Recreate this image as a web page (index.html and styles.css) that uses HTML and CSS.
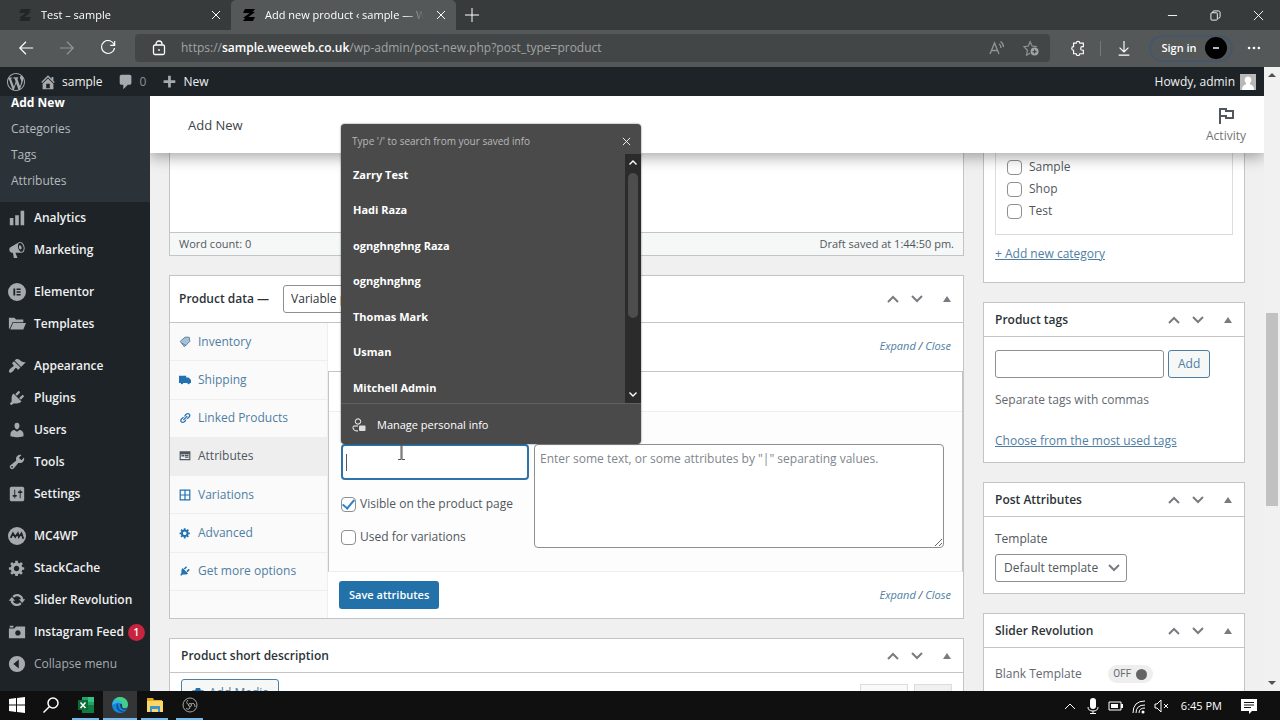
FILE: index.html
```html
<!DOCTYPE html>
<html lang="en">
<head>
    <meta charset="UTF-8">
    <meta name="viewport" content="width=device-width, initial-scale=1.0">
    <title>Add new product ‹ sample — WordPress</title>
    <link rel="stylesheet" href="styles.css">
</head>
<body>
    <svg class="sprite" aria-hidden="true">
        <symbol id="z-logo" viewBox="0 0 14 12"><path d="M3 0h10l-3 4H1zM4 8h9l-2 4H1zM9 3h4L5 9H1z"/></symbol>
        <symbol id="close" viewBox="0 0 10 10"><path d="M1 1l8 8M9 1L1 9"/></symbol>
        <symbol id="up" viewBox="0 0 14 10"><path d="M2 8l5-5 5 5"/></symbol>
        <symbol id="down" viewBox="0 0 14 10"><path d="M2 2l5 5 5-5"/></symbol>
        <symbol id="gear" viewBox="0 0 20 20"><path d="M18 12h-2.18c-.17.7-.44 1.35-.81 1.93l1.54 1.54-2.1 2.1-1.54-1.54c-.58.36-1.23.63-1.91.79V19H8v-2.18c-.68-.16-1.33-.43-1.91-.79l-1.54 1.54-2.12-2.12 1.54-1.54c-.36-.58-.63-1.23-.79-1.91H1V9.03h2.17c.16-.7.44-1.35.8-1.94L2.43 5.55l2.1-2.1 1.54 1.54c.58-.37 1.24-.64 1.93-.81V2h3v2.18c.68.16 1.33.43 1.91.79l1.54-1.54 2.12 2.12-1.54 1.54c.36.59.64 1.24.8 1.94H18V12zm-8.5 1.5c1.66 0 3-1.34 3-3s-1.34-3-3-3-3 1.34-3 3 1.34 3 3 3z"/></symbol>
        <symbol id="plug" viewBox="0 0 20 20"><path d="M13.11 4.36L9.87 7.6 8 5.73l3.24-3.24c.35-.34 1.05-.2 1.56.32.52.51.66 1.21.31 1.55zm-8 1.77l.91-1.12 9.01 9.01-1.19.84c-.71.71-2.63 1.16-3.82 1.16H6.14L4.9 17.26c-.59.59-1.54.59-2.12 0-.59-.58-.59-1.53 0-2.12l1.24-1.24v-3.88c0-1.13.4-3.19 1.09-3.89zm7.26 3.97l3.24-3.24c.34-.35 1.04-.21 1.55.31.52.51.66 1.21.31 1.55l-3.24 3.25z"/></symbol>
        <symbol id="media" viewBox="0 0 20 20"><path d="M7 3h6l1 3h4v11H2V6h4zm3 4a4 4 0 1 0 0 8 4 4 0 0 0 0-8z"/></symbol>
    </svg>

    <!-- Browser -->
    <div class="tabs">
        <div class="tab">
            <svg class="tab-logo"><use href="#z-logo"/></svg>
            <span class="tab-title">Test – sample</span>
            <button class="tab-close" aria-label="Close tab"><svg><use href="#close"/></svg></button>
        </div>
        <div class="tab active">
            <svg class="tab-logo"><use href="#z-logo"/></svg>
            <span class="tab-title">Add new product ‹ sample — WordPress</span>
            <button class="tab-close" aria-label="Close tab"><svg><use href="#close"/></svg></button>
        </div>
        <button class="new-tab" aria-label="New tab"><svg viewBox="0 0 14 14"><path d="M7 0v14M0 7h14"/></svg></button>
        <div class="window-buttons">
            <button aria-label="Minimize"><svg viewBox="0 0 12 12"><path d="M1 6h10"/></svg></button>
            <button aria-label="Restore"><svg viewBox="0 0 12 12"><rect x="1" y="3" width="7" height="8" rx="1"/><path d="M3 3V2q0-1 1-1h5q2 0 2 2v4q0 2-2 2"/></svg></button>
            <button aria-label="Close"><svg viewBox="0 0 12 12"><path d="M1 1l10 10M11 1L1 11"/></svg></button>
        </div>
    </div>
    <div class="toolbar">
        <button aria-label="Back"><svg viewBox="0 0 18 18"><path d="M17 9H2M9 2L2 9l7 7"/></svg></button>
        <button class="dim" aria-label="Forward"><svg viewBox="0 0 18 18"><path d="M1 9h15M9 2l7 7-7 7"/></svg></button>
        <button aria-label="Refresh"><svg viewBox="0 0 18 18"><path d="M16 5.500A7.300 7.300 0 1 0 16.300 9M16.500 1v5h-5"/></svg></button>
        <div class="address">
            <svg viewBox="0 0 14 16"><rect x="1.500" y="5" width="11" height="9.500" rx="1.500"/><path d="M4 5V4a3 3 0 0 1 6 0v1M7 9v2"/></svg>
            <span class="url">https://<b>sample.weeweb.co.uk</b>/wp-admin/post-new.php?post_type=product</span>
            <button class="dim" aria-label="Read aloud"><svg viewBox="0 0 16 16"><path d="M1 14L5.500 3 10 14M2.500 10.500h6M10 4q2 1 2 4M11.500 1.500q3 2 3 5.500"/></svg></button>
            <button class="dim" aria-label="Add to favorites"><svg viewBox="0 0 18 18"><path d="M8 15l-4 2 1-5.500L1 7.500l5-.7L8 2l2.300 4.800 5.200.7"/><circle class="dot" cx="13" cy="13" r="4.500"/><path class="cut" d="M13 10.800v4.400M10.800 13h4.400"/></svg></button>
        </div>
        <button aria-label="Extensions"><svg viewBox="0 0 18 18"><path d="M4 3.500h3a2 2 0 1 1 4 0h4v4h-1a2 2 0 1 0 0 4h1v4h-4a2 2 0 1 1-4 0H4v-4a2 2 0 1 1 0-4z"/></svg></button>
        <span class="divider"></span>
        <button aria-label="Downloads"><svg viewBox="0 0 18 18"><path d="M9 1v12M4 8.500l5 5 5-5M3 17h12"/></svg></button>
        <button class="sign-in">Sign in <span class="profile"></span></button>
        <button class="more" aria-label="Settings and more"><svg viewBox="0 0 18 18"><circle cx="3.500" cy="9" r="1.500"/><circle cx="9" cy="9" r="1.500"/><circle cx="14.500" cy="9" r="1.500"/></svg></button>
    </div>

    <!-- Page -->
    <div class="page">
        <div class="wp">
            <div class="admin-bar">
                <a href="#" aria-label="WordPress"><svg viewBox="0 0 20 20"><path d="M20 10c0-5.510-4.490-10-10-10C4.480 0 0 4.490 0 10c0 5.520 4.480 10 10 10 5.510 0 10-4.480 10-10zM7.780 15.370L4.370 6.220c.55-.02 1.170-.08 1.170-.08.5-.06.44-1.130-.06-1.110 0 0-1.450.11-2.370.11-.18 0-.37 0-.58-.01C4.120 2.690 6.870 1.110 10 1.110c2.330 0 4.450.87 6.050 2.340-.68-.11-1.650.39-1.650 1.580 0 .74.45 1.360.9 2.100.35.61.55 1.360.55 2.460 0 1.490-1.400 5-1.400 5l-3.030-8.370c.54-.02.82-.17.82-.17.5-.05.44-1.250-.06-1.220 0 0-1.440.12-2.380.12-.87 0-2.330-.12-2.330-.12-.5-.03-.56 1.200-.06 1.220l.92.08 1.260 3.410zM17.410 10c.24-.64.74-1.870.43-4.250.7 1.290 1.050 2.710 1.050 4.250 0 3.290-1.730 6.240-4.400 7.780.97-2.590 1.940-5.200 2.920-7.780zM6.100 18.090C3.120 16.650 1.110 13.530 1.110 10c0-1.300.23-2.480.72-3.590C3.250 10.300 4.670 14.200 6.100 18.090zm4.030-6.630l2.580 6.980c-.86.29-1.760.45-2.710.45-.79 0-1.570-.11-2.290-.33.81-2.380 1.620-4.740 2.420-7.100z"/></svg></a>
                <a href="#"><svg viewBox="0 0 20 20"><path d="M16 8.500l1.530 1.530-1.060 1.060L10 4.600l-6.470 6.490-1.060-1.060L10 2.500l4 4v-2h2v4zm-6-2.460l6 5.990V18H4v-5.970zM12 17v-5H8v5h4z"/></svg>sample</a>
                <a href="#" class="comments"><svg viewBox="0 0 20 20"><path d="M5 2h9c1.100 0 2 .9 2 2v7c0 1.100-.9 2-2 2h-2l-5 5v-5H5c-1.100 0-2-.9-2-2V4c0-1.100.9-2 2-2z"/></svg>0</a>
                <a href="#"><svg viewBox="0 0 20 20"><path d="M17 8v3h-5v5H9v-5H4V8h5V3h3v5h5z"/></svg>New</a>
                <a href="#" class="howdy">Howdy, admin <svg class="avatar" viewBox="0 0 16 16"><path d="M0 0h16v16H0z"/><path class="person" d="M2 16q0-5 4-5.500V9Q4 7 5 4q3-3 6 0 1 3-1 5v1.500q4 .5 4 5.500z"/></svg></a>
            </div>
            <div class="wp-body">
                <nav class="sidebar">
                    <div class="submenu">
                        <a href="#" class="current">Add New</a>
                        <a href="#">Categories</a>
                        <a href="#">Tags</a>
                        <a href="#">Attributes</a>
                    </div>
                    <a href="#"><svg viewBox="0 0 20 20"><path d="M18 18V2h-4v16h4zm-6 0V7H8v11h4zm-6 0v-8H2v8h4z"/></svg>Analytics</a>
                    <a href="#"><svg viewBox="0 0 20 20"><path d="M18.150 5.940c.46 1.620.38 3.220-.02 4.480-.42 1.280-1.260 2.180-2.300 2.480-.16.06-.26.06-.4.06-.06.02-.12.02-.18.02-.06.02-.14.02-.22.02h-6.800l2.220 5.500c.02.14-.06.26-.14.34-.08.1-.24.16-.34.16H6.950c-.1 0-.26-.06-.34-.16-.08-.08-.16-.2-.14-.34l-1-5.500H4.250l-.02-.02c-.5.06-1.080-.18-1.540-.62s-.88-1.080-1.060-1.880c-.24-.8-.2-1.560-.02-2.200.18-.62.58-1.080 1.060-1.300l.02-.02 9-5.400c.1-.06.18-.1.24-.16.06-.04.14-.08.24-.12.16-.08.28-.12.5-.18 1.040-.3 2.240.1 3.220.98s1.840 2.240 2.260 3.860zm-2.580 5.980h-.02c.4-.1.74-.34 1.040-.7.58-.7.86-1.760.86-3.040 0-.64-.1-1.300-.28-1.980-.34-1.360-1.020-2.500-1.780-3.240s-1.680-1.100-2.460-.88c-.82.22-1.400.96-1.700 2-.32 1.040-.28 2.360.06 3.720.38 1.360 1 2.500 1.800 3.240.78.74 1.620 1.100 2.480.88zm-2.540-7.080c.22-.04.42-.02.62.04.38.16.76.48 1.020 1s.42 1.200.42 1.780c0 .3-.04.56-.12.8-.18.48-.44.84-.86.94-.34.1-.8-.06-1.140-.4s-.64-.86-.78-1.500c-.18-.62-.12-1.240.02-1.720s.48-.84.82-.94z"/></svg>Marketing</a>
                    <a href="#" class="group"><svg viewBox="0 0 20 20"><path fill-rule="evenodd" d="M10 0a10 10 0 1 0 0 20 10 10 0 0 0 0-20zM6 6h2v8H6zM9.500 6H14v1.700H9.500zM9.500 9.200H14v1.700H9.500zM9.500 12.300H14V14H9.500z"/></svg>Elementor</a>
                    <a href="#"><svg viewBox="0 0 20 20"><path d="M1 3h6l2 2h8v3H5l-3 7H1zM5.500 9H20l-3 7H2.500z"/></svg>Templates</a>
                    <a href="#" class="group"><svg viewBox="0 0 20 20"><path d="M14.480 11.060L7.410 3.990l1.500-1.500c.5-.56 2.300-.47 3.510.32 1.210.8 1.430 1.280 2.910 2.100 1.180.64 2.450 1.260 4.450.85zm-.71.71L6.700 4.700 4.930 6.470c-.39.39-.39 1.020 0 1.410l1.060 1.060c.39.39.39 1.030 0 1.420-.6.6-1.430 1.110-2.210 1.690-.35.26-.7.53-1.010.84C1.430 14.230.4 16.080 1.400 17.070c.99 1 2.840-.03 4.180-1.360.31-.31.58-.66.85-1.020.57-.78 1.080-1.610 1.690-2.210.39-.39 1.020-.39 1.410 0l1.060 1.060c.39.39 1.020.39 1.410 0z"/></svg>Appearance</a>
                    <a href="#"><svg><use href="#plug"/></svg>Plugins</a>
                    <a href="#"><svg viewBox="0 0 20 20"><path d="M10 9.250c-2.270 0-2.730-3.440-2.730-3.440C7 4.020 7.820 2 9.970 2c2.160 0 2.980 2.020 2.710 3.810 0 0-.41 3.440-2.680 3.440zm0 2.570L12.720 10c2.390 0 4.520 2.330 4.520 4.530v2.490s-3.650 1.130-7.240 1.130c-3.650 0-7.240-1.130-7.240-1.130v-2.490c0-2.250 1.940-4.480 4.470-4.480z"/></svg>Users</a>
                    <a href="#"><svg viewBox="0 0 20 20"><path d="M16.680 9.770c-1.340 1.340-3.300 1.670-4.950.99l-5.410 6.520c-.99.99-2.590.99-3.580 0s-.99-2.590 0-3.570l6.520-5.420c-.68-1.650-.35-3.610.99-4.950 1.280-1.280 3.120-1.620 4.720-1.060l-2.890 2.890 2.820 2.820 2.860-2.870c.53 1.580.18 3.390-1.080 4.650zM3.810 16.210c.4.39 1.040.39 1.430 0 .4-.4.4-1.040 0-1.430-.39-.4-1.030-.4-1.430 0-.39.39-.39 1.030 0 1.430z"/></svg>Tools</a>
                    <a href="#"><svg viewBox="0 0 20 20"><path d="M18 16V4c0-1.100-.9-2-2-2H4c-1.100 0-2 .9-2 2v12c0 1.100.9 2 2 2h12c1.100 0 2-.9 2-2zM8 11h1c.55 0 1 .45 1 1s-.45 1-1 1H8v1.500c0 .28-.22.5-.5.5s-.5-.22-.5-.5V13H6c-.55 0-1-.45-1-1s.45-1 1-1h1V5.500c0-.28.22-.5.5-.5s.5.22.5.5V11zm5-2h-1c-.55 0-1-.45-1-1s.45-1 1-1h1V5.500c0-.28.22-.5.5-.5s.5.22.5.5V7h1c.55 0 1 .45 1 1s-.45 1-1 1h-1v5.500c0 .28-.22.5-.5.5s-.5-.22-.5-.5V9z"/></svg>Settings</a>
                    <a href="#" class="group"><svg viewBox="0 0 20 20"><circle cx="10" cy="10" r="10"/><path class="mark" d="M3 12l2.500-5 2.500 4 3-4 1 4 3-4 2 6"/></svg>MC4WP</a>
                    <a href="#"><svg><use href="#gear"/></svg>StackCache</a>
                    <a href="#"><svg viewBox="0 0 20 20"><path d="M10.200 3.280c3.530 0 6.430 2.610 6.920 6h2.080l-3.500 4-3.500-4h2.320c-.45-1.970-2.210-3.450-4.320-3.450-1.450 0-2.730.71-3.540 1.780L4.950 5.660C6.230 4.200 8.110 3.280 10.200 3.280zm-.4 13.440c-3.520 0-6.430-2.610-6.920-6H.8l3.500-4c1.170 1.330 2.330 2.670 3.500 4H5.480c.45 1.970 2.210 3.450 4.320 3.450 1.450 0 2.730-.71 3.540-1.780l1.710 1.950c-1.280 1.460-3.150 2.380-5.250 2.380z"/></svg>Slider Revolution</a>
                    <a href="#"><svg viewBox="0 0 20 20"><path d="M6 5V3H2v2h4zm13 12V4H9L7 6H1v11h18zm-8-9c1.660 0 3 1.340 3 3s-1.340 3-3 3-3-1.340-3-3 1.340-3 3-3z"/></svg>Instagram Feed <span class="count">1</span></a>
                    <button class="collapse"><svg viewBox="0 0 20 20"><path fill-rule="evenodd" d="M10 1a9 9 0 1 0 0 18 9 9 0 0 0 0-18zM12 5v10l-6-5z"/></svg>Collapse menu</button>
                </nav>

                <main class="main">
                    <header class="wc-header">
                        <h1>Add New</h1>
                        <button class="activity"><svg viewBox="0 0 18 18"><path d="M3 17V2h6v2h7v7H9V9H3"/></svg>Activity</button>
                    </header>
                    <div class="columns">
                        <div class="left">
                            <section class="box editor">
                                <div class="editor-text"></div>
                                <div class="editor-status"><span>Word count: 0</span><span>Draft saved at 1:44:50 pm.</span></div>
                            </section>

                            <section class="box">
                                <div class="box-head tall">
                                    <h2>Product data —</h2>
                                    <select class="product-type" aria-label="Product type"><option>Variable product</option></select>
                                    <span class="handles">
                                        <button aria-label="Move up"><svg><use href="#up"/></svg></button>
                                        <button aria-label="Move down"><svg><use href="#down"/></svg></button>
                                        <button class="toggle" aria-label="Toggle panel"></button>
                                    </span>
                                </div>
                                <div class="product-data">
                                    <div class="product-tabs">
                                        <a href="#"><svg viewBox="0 0 20 20"><path class="soft" d="M2 9l8-7h7l1 7-9 9z"/><path class="line" d="M2 9l8-7h7l1 7-9 9zM5 12l7 4"/></svg>Inventory</a>
                                        <a href="#"><svg viewBox="0 0 20 20"><path d="M0 3h12v3h4l4 4v5h-2a2 2 0 0 1-4 0H7a2 2 0 0 1-4 0H0z"/></svg>Shipping</a>
                                        <a href="#"><svg viewBox="0 0 20 20"><path d="M17.740 2.760c1.680 1.690 1.680 4.410 0 6.100l-1.530 1.520c-1.120 1.120-2.700 1.470-4.140 1.090l2.620-2.610.76-.77.76-.76c.84-.84.84-2.200 0-3.040-.84-.85-2.200-.85-3.040 0l-.77.76-3.380 3.380c-.37-1.440-.02-3.020 1.100-4.140l1.520-1.530c1.690-1.680 4.420-1.680 6.100 0zM8.590 13.430l5.340-5.340c.42-.42.42-1.100 0-1.520-.44-.43-1.130-.39-1.530 0l-5.330 5.340c-.42.42-.42 1.100 0 1.520.44.43 1.130.39 1.520 0zm-.76 2.290l4.140-4.150c.38 1.440.03 3.020-1.090 4.140l-1.520 1.530c-1.690 1.680-4.410 1.680-6.100 0-1.680-1.680-1.680-4.420 0-6.100l1.530-1.520c1.120-1.120 2.700-1.470 4.140-1.100l-4.140 4.150c-.85.84-.85 2.200 0 3.050.84.84 2.200.84 3.040 0z"/></svg>Linked Products</a>
                                        <a href="#" class="active"><svg viewBox="0 0 20 20"><path fill-rule="evenodd" d="M1 2h18v15H1zM3 7v8h14V7zM4 8h5v3H4zM10 8h6v2h-6zM10 11h6v2h-6z"/></svg>Attributes</a>
                                        <a href="#"><svg viewBox="0 0 20 20"><path fill-rule="evenodd" d="M1 1h18v18H1zM3 3v6h6V3zM11 3v6h6V3zM3 11v6h6v-6zM11 11v6h6v-6z"/></svg>Variations</a>
                                        <a href="#"><svg><use href="#gear"/></svg>Advanced</a>
                                        <a href="#"><svg><use href="#plug"/></svg>Get more options</a>
                                    </div>
                                    <div class="panel">
                                        <div class="panel-bar"><span class="expand"><a href="#">Expand</a> / <a href="#">Close</a></span></div>
                                        <div class="attribute">
                                            <div class="attribute-head"></div>
                                            <div class="attribute-body">
                                                <div class="attribute-name">
                                                    <input type="text" class="name-input" aria-label="Name">
                                                    <label><input type="checkbox" checked> Visible on the product page</label>
                                                    <label><input type="checkbox"> Used for variations</label>
                                                </div>
                                                <textarea aria-label="Value(s)" placeholder="Enter some text, or some attributes by &quot;|&quot; separating values."></textarea>
                                            </div>
                                        </div>
                                        <div class="panel-bar save"><button class="primary">Save attributes</button><span class="expand"><a href="#">Expand</a> / <a href="#">Close</a></span></div>
                                    </div>
                                </div>
                            </section>

                            <section class="box">
                                <div class="box-head">
                                    <h2>Product short description</h2>
                                    <span class="handles">
                                        <button aria-label="Move up"><svg><use href="#up"/></svg></button>
                                        <button aria-label="Move down"><svg><use href="#down"/></svg></button>
                                        <button class="toggle" aria-label="Toggle panel"></button>
                                    </span>
                                </div>
                                <div class="short-tools">
                                    <button class="secondary"><svg><use href="#media"/></svg>Add Media</button>
                                    <button class="mode visual">Visual</button>
                                    <button class="mode">Text</button>
                                </div>
                            </section>
                        </div>

                        <div class="right">
                            <section class="box categories">
                                <div class="category-list">
                                    <label><input type="checkbox"> Sample</label>
                                    <label><input type="checkbox"> Shop</label>
                                    <label><input type="checkbox"> Test</label>
                                </div>
                                <a href="#">+ Add new category</a>
                            </section>

                            <section class="box">
                                <div class="box-head">
                                    <h2>Product tags</h2>
                                    <span class="handles">
                                        <button aria-label="Move up"><svg><use href="#up"/></svg></button>
                                        <button aria-label="Move down"><svg><use href="#down"/></svg></button>
                                        <button class="toggle" aria-label="Toggle panel"></button>
                                    </span>
                                </div>
                                <div class="tags">
                                    <div class="tag-add"><input type="text" aria-label="Add new tag"><button class="secondary">Add</button></div>
                                    <p>Separate tags with commas</p>
                                    <a href="#">Choose from the most used tags</a>
                                </div>
                            </section>

                            <section class="box">
                                <div class="box-head">
                                    <h2>Post Attributes</h2>
                                    <span class="handles">
                                        <button aria-label="Move up"><svg><use href="#up"/></svg></button>
                                        <button aria-label="Move down"><svg><use href="#down"/></svg></button>
                                        <button class="toggle" aria-label="Toggle panel"></button>
                                    </span>
                                </div>
                                <div class="template">
                                    <label for="template">Template</label>
                                    <div class="select-wrap">
                                        <select id="template"><option>Default template</option></select>
                                        <svg><use href="#down"/></svg>
                                    </div>
                                </div>
                            </section>

                            <section class="box">
                                <div class="box-head">
                                    <h2>Slider Revolution</h2>
                                    <span class="handles">
                                        <button aria-label="Move up"><svg><use href="#up"/></svg></button>
                                        <button aria-label="Move down"><svg><use href="#down"/></svg></button>
                                        <button class="toggle" aria-label="Toggle panel"></button>
                                    </span>
                                </div>
                                <div class="slider-options">
                                    <span>Blank Template</span>
                                    <button class="switch" role="switch" aria-checked="false" aria-label="Blank Template">OFF<i></i></button>
                                </div>
                            </section>
                        </div>
                    </div>
                </main>
            </div>
        </div>
        <div class="scrollbar">
            <span class="arrow-up"></span>
            <span class="thumb"></span>
            <span class="arrow-down"></span>
        </div>
    </div>

    <!-- Autofill popup -->
    <div class="autofill">
        <div class="autofill-head">Type '/' to search from your saved info <button aria-label="Close"><svg><use href="#close"/></svg></button></div>
        <div class="autofill-body">
            <ul>
                <li>Zarry Test</li>
                <li>Hadi Raza</li>
                <li>ognghnghng Raza</li>
                <li>ognghnghng</li>
                <li>Thomas Mark</li>
                <li>Usman</li>
                <li>Mitchell Admin</li>
            </ul>
            <div class="autofill-scroll">
                <svg><use href="#up"/></svg>
                <span></span>
                <svg><use href="#down"/></svg>
            </div>
        </div>
        <button class="manage"><svg viewBox="0 0 14 14"><circle cx="6" cy="3.500" r="2.700"/><path d="M6 8H2Q1 8 1 9.500 1 13 6 13"/><rect class="solid" x="7" y="7.500" width="6.500" height="5.500" rx="1"/></svg>Manage personal info</button>
    </div>
    <svg class="cursor" viewBox="0 0 7 16" aria-hidden="true"><path d="M0 .5h3v15H0M7 .5H4v15h3"/></svg>

    <!-- Windows taskbar -->
    <div class="taskbar">
        <button aria-label="Start"><svg viewBox="0 0 16 16"><path fill="#fff" d="M0 2l7-1v6.500H0zM8 1l8-1v7.500H8zM0 8.500h7V15l-7-1zM8 8.500h8V16l-8-1z"/></svg></button>
        <button aria-label="Search"><svg viewBox="0 0 16 16"><g fill="none" stroke="#fff" stroke-width="1.500"><circle cx="10" cy="6" r="5"/><path d="M6.500 9.500L.5 15.500"/></g></svg></button>
        <button class="running" aria-label="Excel"><svg viewBox="0 0 16 16"><path fill="#21a366" d="M4 0h12v8H4z"/><path fill="#107c41" d="M4 8h12v8H4z"/><path fill="#33c481" d="M10 0h6v5h-6z"/><path fill="#0b6a38" d="M0 3h10v10H0z"/><path d="M2.500 5.500l5 5.500M7.500 5.500l-5 5.500" stroke="#fff" stroke-width="1.500"/></svg></button>
        <button class="running focused" aria-label="Edge"><svg viewBox="0 0 16 16"><circle cx="8" cy="8" r="8" fill="#1787d8"/><path fill="#45cf85" d="M1 5Q4-1 10 .3q6 1.500 6 7.700-1 4-6 3 1-3-1-5-4-3-8-1z"/><path fill="#31b8dc" d="M0 8q1-6 6-5 4 .5 4 5Q8 5 5 6 1 7 0 8z"/><path fill="#0b4da2" d="M5 6Q3 11 7 14q3 2 6 0-7 0-7-6z"/><path fill="#26364a" d="M8 8q1-2 2-.5Q9 9.500 11 11q2 1 4.500 0-1 1.500-3 2-4-1-4.500-5z"/></svg></button>
        <button class="running" aria-label="File Explorer"><svg viewBox="0 0 16 16"><path fill="#e8a91c" d="M0 1h6l1 2h8v4H0z"/><path fill="#fcd667" d="M0 4h16v11H0z"/><path fill="#3f94cf" d="M3 9h10v6h-2v-3H5v3H3z"/></svg></button>
        <button class="running" aria-label="OBS Studio"><svg viewBox="0 0 16 16"><g fill="none" stroke="#a5a5a5"><circle cx="8" cy="8" r="7"/><path d="M7 8Q3 6 6 3M9 7q4-2 4 3M8 9.500q0 4-4 2"/><circle cx="8" cy="8" r="1.500"/></g></svg></button>
        <div class="tray">
            <svg viewBox="0 0 16 16"><path class="stroke" d="M3 11l5-5 5 5"/></svg>
            <svg viewBox="0 0 16 16"><rect x="5" y="0" width="6" height="11" rx="3"/><path class="stroke" d="M3 9q0 4 5 4t5-4M8 13v3M5 15.500h6"/></svg>
            <svg viewBox="0 0 16 16"><path class="stroke" d="M1 4h12v8H1z"/><path d="M3 6h7v4H3zM13 6h2v4h-2z"/></svg>
            <svg viewBox="0 0 16 16"><path class="stroke" d="M2 15Q2 3 14 3M5 15q0-8 9-8M8 15q0-5 6-5"/><circle cx="12" cy="14" r="1.500"/></svg>
            <svg viewBox="0 0 16 16"><path class="stroke" d="M1 6h2l4-4v12l-4-4H1zM10 6l4 4M14 6l-4 4"/></svg>
            <time>6:45 PM</time>
            <svg viewBox="0 0 16 16"><path d="M0 1h16v12h-5l-3 3v-3H0z"/><path class="lines" d="M3 4.500h10M3 7h10M3 9.500h7"/></svg>
        </div>
    </div>
</body>
</html>
```

FILE: styles.css
```css
* {
    box-sizing: border-box;
}
body {
    margin: 0;
    height: 100vh;
    display: flex;
    flex-direction: column;
    overflow: hidden;
    position: relative;
    font-family: "Open Sans", "Noto Sans", sans-serif;
    font-size: 12px;
    line-height: 18px;
    color: #50575e;
    background: #f0f0f1;
}
button, input, select, textarea {
    font: inherit;
    color: inherit;
    margin: 0;
}
button {
    display: flex;
    align-items: center;
    justify-content: center;
    padding: 0;
    border: none;
    background: none;
}
a {
    color: #4f7ea3;
}
svg {
    flex: none;
}
.sprite {
    display: none;
}

/* browser tabs */
.tabs {
    display: flex;
    flex: none;
    height: 30px;
    background: #383b3c;
    color: #fff;
    font-size: 11px;
    font-weight: 500;
}
.tab {
    display: flex;
    align-items: center;
    width: 231px;
    padding: 0 10px 0 18px;
}
.tab.active {
    width: 225px;
    padding: 0 10px 0 11px;
    background: #545858;
    border-radius: 5px 5px 0 0;
}
.tab-title {
    flex: 1;
    margin: 0 12px 0 9px;
    white-space: nowrap;
    overflow: hidden;
    mask-image: linear-gradient(to right, #000 88%, transparent);
}
.tabs svg, .toolbar svg {
    stroke: #fff;
    fill: none;
}
.tabs .tab-logo {
    width: 14px;
    height: 12px;
    stroke: none;
    fill: #222626;
}
.tabs .active .tab-logo {
    fill: #000;
}
.tab-close svg {
    width: 10px;
    height: 10px;
}
.new-tab {
    width: 32px;
}
.new-tab svg {
    width: 14px;
    height: 14px;
}
.window-buttons {
    display: flex;
    margin-left: auto;
}
.window-buttons button {
    width: 43px;
}
.window-buttons svg {
    width: 11px;
    height: 11px;
}

/* browser toolbar */
.toolbar {
    display: flex;
    flex: none;
    align-items: center;
    height: 37px;
    padding: 0 10px 1px 5px;
    background: #545858;
    color: #fff;
}
.toolbar button {
    width: 41px;
}
.toolbar svg {
    width: 16px;
    height: 16px;
    stroke-width: 1.3;
}
.toolbar .dim svg {
    stroke: #929696;
}
.address {
    display: flex;
    flex: 1;
    align-items: center;
    height: 28px;
    margin: 0 7px;
    padding: 0 2px 0 16px;
    border-radius: 4px;
    background: #434647;
}
.address button {
    width: 34px;
}
.url {
    flex: 1;
    margin-left: 14px;
    color: #a0a4a5;
}
.url b {
    font-weight: 600;
    color: #fff;
}
.toolbar .dot {
    fill: #a0a4a5;
    stroke: none;
}
.toolbar .cut {
    stroke: #434647;
}
.divider {
    width: 1px;
    height: 15px;
    margin: 0 2px;
    background: #757979;
}
.toolbar .sign-in {
    gap: 8px;
    width: 84px;
    height: 27px;
    margin: 0 5px;
    padding-left: 6px;
    border: 2px solid #46566a;
    border-radius: 14px;
    font-size: 11px;
    font-weight: 600;
}
.profile {
    display: flex;
    align-items: center;
    justify-content: center;
    width: 22px;
    height: 22px;
    border-radius: 50%;
    background: #000;
}
.profile::after {
    content: "";
    width: 6px;
    height: 2px;
    background: #b5b9c0;
}
.toolbar .more {
    width: 32px;
}
.toolbar .more svg {
    fill: #fff;
    stroke: none;
}

/* wordpress frame */
.page {
    display: flex;
    flex: 1;
    min-height: 0;
}
.wp {
    display: flex;
    flex: 1;
    flex-direction: column;
    min-width: 0;
}
.admin-bar {
    display: flex;
    flex: none;
    align-items: center;
    gap: 14px;
    height: 29px;
    padding: 0 8px 0 7px;
    background: #1d2327;
    font-weight: 500;
}
.admin-bar a {
    display: flex;
    align-items: center;
    gap: 5px;
    color: #f0f0f1;
    text-decoration: none;
}
.admin-bar svg {
    width: 18px;
    height: 18px;
    fill: #a7aaad;
}
.admin-bar .comments {
    color: #8c9195;
    font-weight: 400;
}
.admin-bar .howdy {
    margin-left: auto;
}
.admin-bar .avatar {
    width: 16px;
    height: 16px;
    fill: #b8b8b8;
}
.avatar .person {
    fill: #fff;
}
.wp-body {
    display: flex;
    flex: 1;
    min-height: 0;
}
.sidebar {
    flex: none;
    width: 150px;
    overflow: hidden;
    background: #1d2327;
}
.sidebar a, .collapse {
    display: flex;
    align-items: center;
    justify-content: flex-start;
    gap: 8px;
    height: 32px;
    padding-left: 8px;
    color: #f0f0f1;
    font-weight: 600;
    text-decoration: none;
    white-space: nowrap;
}
.sidebar .group {
    margin-top: 10px;
}
.sidebar svg {
    width: 18px;
    height: 18px;
    fill: #a7aaad;
}
.sidebar .mark {
    fill: none;
    stroke: #1d2327;
    stroke-width: 2;
}
.submenu {
    height: 106px;
    padding-bottom: 8px;
    background: #2c3338;
    display: flex;
    flex-direction: column;
    justify-content: flex-end;
}
.sidebar .submenu a {
    flex: none;
    height: 26px;
    padding-left: 11px;
    color: #b5babe;
    font-weight: 400;
}
.sidebar .submenu .current {
    color: #fff;
    font-weight: 700;
}
.count {
    width: 17px;
    margin-left: -4px;
    border-radius: 9px;
    background: #c9243f;
    color: #fff;
    font-size: 10px;
    line-height: 17px;
    text-align: center;
}
.sidebar .collapse {
    color: #a7aaad;
    font-weight: 400;
}
.main {
    display: flex;
    flex: 1;
    flex-direction: column;
    min-width: 0;
    overflow: hidden;
}
.wc-header {
    display: flex;
    flex: none;
    align-items: center;
    justify-content: space-between;
    height: 57px;
    padding: 0 18px 0 38px;
    background: #fff;
    box-shadow: 0 4px 14px rgba(0, 0, 0, 0.35);
    position: relative;
    z-index: 1;
}
.wc-header h1 {
    margin: 0;
    font-size: 13px;
    font-weight: 400;
    color: #3c434a;
}
.activity {
    flex-direction: column;
    gap: 2px;
    padding-top: 3px;
    color: #757575;
}
.activity svg {
    width: 18px;
    height: 18px;
    fill: none;
    stroke: #50575e;
    stroke-width: 2;
}
.columns {
    display: flex;
    flex: 1;
    gap: 19px;
    min-height: 0;
    padding: 0 19px;
}
.left {
    flex: 1;
    min-width: 0;
}
.right {
    flex: none;
    width: 262px;
}
.box {
    margin-bottom: 19px;
    border: 1px solid #c3c4c7;
    background: #fff;
}
.box-head {
    display: flex;
    align-items: center;
    height: 34px;
    padding: 0 11px;
    border-bottom: 1px solid #c3c4c7;
}
.box-head.tall {
    height: 47px;
    padding-left: 9px;
}
.box-head h2 {
    margin: 0;
    font-size: 12px;
    font-weight: 600;
    color: #2c3338;
}
.product-type {
    width: 150px;
    height: 28px;
    margin-left: 14px;
    padding: 0 7px;
    border: 1px solid #8c8f94;
    border-radius: 3px;
    background: #fff;
    appearance: none;
    color: #2c3338;
}
.handles {
    display: flex;
    align-items: center;
    gap: 10px;
    margin-left: auto;
}
.handles svg, .select-wrap svg {
    width: 14px;
    height: 10px;
    fill: none;
    stroke: #787c82;
    stroke-width: 2;
}
.toggle {
    margin: 0 1px 0 9px;
    border-right: 4px solid transparent;
    border-bottom: 6px solid #787c82;
    border-left: 4px solid transparent;
}

/* editor */
.editor {
    border-top: none;
}
.editor-text {
    height: 79px;
}
.editor-status {
    display: flex;
    justify-content: space-between;
    padding: 2px 9px;
    border-top: 1px solid #c3c4c7;
    background: #f6f7f7;
    font-size: 11px;
}

/* product data */
.product-data {
    display: flex;
}
.product-tabs {
    display: grid;
    flex: none;
    grid-template-rows: repeat(7, 1fr);
    width: 158px;
    padding-bottom: 27px;
    border-right: 1px solid #eee;
    background: #fafafa;
}
.product-tabs a {
    display: flex;
    align-items: center;
    gap: 7px;
    padding-left: 9px;
    border-bottom: 1px solid #eee;
    text-decoration: none;
}
.product-tabs .active {
    background: #eee;
    color: #50575e;
}
.product-tabs svg {
    width: 12px;
    height: 12px;
    fill: #2271b1;
}
.product-tabs .active svg {
    fill: #50575e;
}
.product-tabs .soft {
    fill: #a9bfd3;
}
.product-tabs .line {
    fill: none;
    stroke: #4f7ea3;
    stroke-width: 1.5;
}
.panel {
    flex: 1;
    min-width: 0;
}
.panel-bar {
    display: flex;
    align-items: center;
    height: 48px;
    padding: 0 12px 2px 11px;
}
.panel-bar.save {
    height: 46px;
    padding-bottom: 0;
}
.expand {
    margin-left: auto;
    font-size: 11px;
    font-style: italic;
}
.expand a {
    text-decoration: none;
}
.attribute {
    border: 1px solid #c3c4c7;
    border-bottom-color: #eee;
}
.attribute-head {
    height: 40px;
    border-bottom: 1px solid #eee;
}
.attribute-body {
    display: flex;
    gap: 5px;
    height: 159px;
    padding: 32px 18px 24px 12px;
    background: #fdfdfd;
}
.attribute-name {
    width: 188px;
}
.attribute-name label {
    display: flex;
    align-items: center;
    gap: 4px;
    margin-bottom: 15px;
    white-space: nowrap;
}
.name-input {
    display: block;
    width: 100%;
    height: 36px;
    margin-bottom: 15px;
    border: 2px solid #2f74a8;
    border-radius: 4px;
    background: linear-gradient(#50575e, #50575e) 3px center / 1px 17px no-repeat #fff;
}
textarea {
    flex: 1;
    min-width: 0;
    height: 104px;
    padding: 5px;
    border: 1px solid #8c8f94;
    border-radius: 4px;
    background: #fff;
}
textarea::placeholder {
    color: #81868c;
}
input[type="checkbox"] {
    flex: none;
    width: 15px;
    height: 15px;
    border: 1px solid #8c8f94;
    border-radius: 4px;
    background: #fff;
    appearance: none;
    display: flex;
    align-items: center;
    justify-content: center;
}
input[type="checkbox"]:checked::before {
    content: "";
    width: 5px;
    height: 10px;
    margin-bottom: 2px;
    border: solid #3582c4;
    border-width: 0 2px 2px 0;
    transform: rotate(40deg);
}
.primary {
    height: 28px;
    padding: 0 10px;
    border-radius: 3px;
    background: #2371a9;
    color: #fff;
    font-size: 11px;
    font-weight: 600;
}
.secondary {
    gap: 4px;
    height: 28px;
    padding: 0 9px;
    border: 1px solid #4f7ea3;
    border-radius: 3px;
    background: #f6f7f7;
    color: #4f7ea3;
}
.short-tools {
    display: flex;
    gap: 6px;
    padding: 6px 11px;
}
.short-tools svg {
    width: 14px;
    height: 14px;
    fill: #2271b1;
}
.mode {
    width: 38px;
    height: 26px;
    margin-top: 5px;
    border: 1px solid #dcdcde;
    background: #f0f0f1;
}
.mode.visual {
    width: 48px;
    margin-left: auto;
    background: #f9f9f9;
}

/* right column */
.categories {
    height: 130px;
    padding: 0 11px;
    border-top: none;
}
.category-list {
    height: 82px;
    margin-bottom: 10px;
    padding: 3px 11px;
    border: 1px solid #dcdcde;
    border-top: none;
}
.category-list label {
    display: flex;
    align-items: center;
    gap: 7px;
    height: 22px;
}
.tags {
    padding: 13px 11px 12px;
}
.tag-add {
    display: flex;
    gap: 4px;
}
.tag-add input {
    width: 169px;
    height: 28px;
    border: 1px solid #8c8f94;
    border-radius: 3px;
}
.tags p {
    margin: 13px 0 23px;
    color: #646970;
}
.template {
    padding: 13px 11px 11px;
}
.template label {
    display: block;
    margin-bottom: 6px;
}
.select-wrap {
    display: flex;
    align-items: center;
    width: 132px;
    height: 28px;
    padding-right: 5px;
    border: 1px solid #8c8f94;
    border-radius: 3px;
}
.select-wrap select {
    flex: 1;
    min-width: 0;
    padding: 0 0 0 8px;
    border: none;
    background: none;
    appearance: none;
}
.slider-options {
    display: flex;
    align-items: center;
    gap: 26px;
    padding: 17px 11px;
    color: #646970;
}
.switch {
    gap: 5px;
    width: 45px;
    height: 18px;
    border-radius: 9px;
    background: #eee;
    font-family: Roboto, sans-serif;
    font-size: 10px;
}
.switch i {
    width: 11px;
    height: 11px;
    border-radius: 50%;
    background: #646464;
}

/* page scrollbar */
.scrollbar {
    display: flex;
    flex: none;
    flex-direction: column;
    align-items: center;
    width: 16px;
    padding: 6px 0;
    background: #f1f1f1;
}
.arrow-up {
    border: 4px solid transparent;
    border-top: none;
    border-bottom-color: #505050;
}
.thumb {
    width: 12px;
    height: 193px;
    margin-top: 236px;
    background: #c1c1c1;
}
.arrow-down {
    margin-top: auto;
    border: 4px solid transparent;
    border-bottom: none;
    border-top-color: #505050;
}

/* autofill popup */
.autofill {
    position: absolute;
    top: 124px;
    left: 341px;
    z-index: 2;
    width: 300px;
    border-radius: 4px;
    background: #4a4a4a;
    box-shadow: 0 0 2px rgba(0, 0, 0, 0.6);
    color: #fff;
}
.autofill-head {
    display: flex;
    align-items: center;
    justify-content: space-between;
    height: 30px;
    padding: 4px 10px 0 11px;
    color: #b9b9b9;
    font-size: 10px;
}
.autofill svg {
    fill: none;
    stroke: #fff;
}
.autofill-head svg {
    width: 9px;
    height: 9px;
}
.autofill-body {
    display: flex;
    height: 250px;
    border-bottom: 1px solid #606060;
}
.autofill ul {
    flex: 1;
    margin: 0;
    padding: 3px 12px 0;
    list-style: none;
    font-size: 11px;
    font-weight: 700;
}
.autofill li {
    line-height: 35px;
}
.autofill li:nth-child(even) {
    margin-bottom: 1px;
}
.autofill-scroll {
    display: flex;
    flex-direction: column;
    align-items: center;
    width: 16px;
    padding: 5px 0;
    background: #2b2b2b;
}
.autofill-scroll svg {
    width: 10px;
    height: 7px;
    stroke-width: 2;
}
.autofill-scroll span {
    width: 10px;
    height: 145px;
    margin: 7px 0 auto;
    border-radius: 5px;
    background: #4d4d4d;
}
.manage {
    gap: 11px;
    height: 40px;
    padding: 2px 0 0 11px;
    font-size: 11px;
    font-weight: 500;
}
.manage svg {
    width: 14px;
    height: 14px;
}
.manage .solid {
    fill: #ddd;
    stroke: none;
}
.cursor {
    position: absolute;
    top: 444px;
    left: 398px;
    z-index: 3;
    width: 7px;
    height: 16px;
    fill: none;
    stroke: #555;
}

/* taskbar */
.taskbar {
    display: flex;
    flex: none;
    height: 29px;
    padding-right: 23px;
    background: #101010;
    color: #fff;
}
.taskbar button {
    width: 34px;
    border-bottom: 2px solid transparent;
}
.taskbar .running {
    border-bottom-color: #76b9ed;
    width: 27px;
    margin: 0 4px;
}
.taskbar .focused {
    width: 34px;
    margin: 0;
    background: #333536;
}
.taskbar svg {
    width: 16px;
    height: 16px;
}
.tray {
    display: flex;
    align-items: center;
    gap: 7px;
    margin-left: auto;
    font-size: 11px;
}
.tray svg {
    fill: #fff;
}
.tray .stroke {
    fill: none;
    stroke: #fff;
}
.tray .lines {
    stroke: #101010;
}
.tray time {
    margin: 0 12px 0 4px;
    white-space: nowrap;
}
```
